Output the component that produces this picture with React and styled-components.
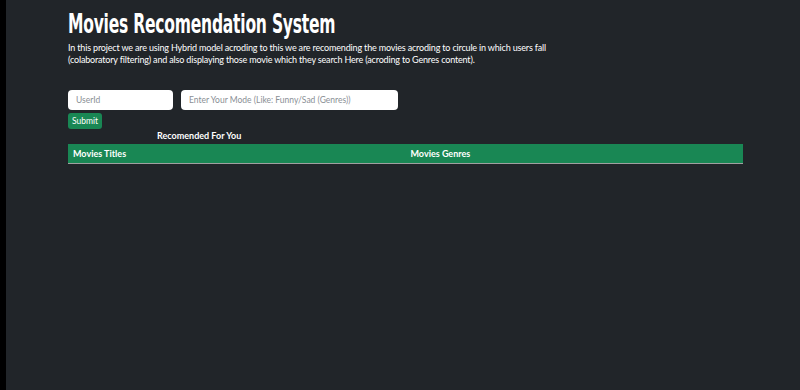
import React, { useState } from "react";
import styled, { createGlobalStyle } from "styled-components";

const GlobalStyle = createGlobalStyle`
  html, body {
    margin: 0;
    padding: 0;
    background: #212529;
  }
  body {
    font-family: Lato, "Open Sans", Arial, sans-serif;
    color: #ffffff;
  }
`;

const Page = styled.div`
  display: flex;
  min-height: 390px;
`;

const Strip = styled.div`
  width: 6px;
  background: #000000;
  flex-shrink: 0;
`;

const Main = styled.main`
  flex: 1;
  padding: 10px 0 0 62px;
`;

// heavy condensed headline (stand-in for Impact)
const Title = styled.h1`
  margin: 0;
  font-family: "DejaVu Sans", sans-serif;
  font-stretch: condensed;
  font-weight: 700;
  font-size: 27px;
  line-height: 28px;
  letter-spacing: -0.35px;
  transform: scaleX(0.64);
  transform-origin: left center;
  white-space: nowrap;
`;

const Intro = styled.p`
  margin: 4px 0 0;
  font-size: 9px;
  line-height: 12px;
  letter-spacing: -0.17px;
  white-space: nowrap;
`;

const Form = styled.form`
  margin-top: 24px;
  display: flex;
  flex-direction: column;
  align-items: flex-start;
  gap: 3px;
`;

const Inputs = styled.div`
  display: flex;
  gap: 8px;
`;

const Field = styled.input`
  box-sizing: border-box;
  width: ${(p) => p.$w}px;
  height: 20px;
  border: none;
  border-radius: 4px;
  padding: 0 8px;
  font-family: inherit;
  font-size: 8.5px;
  color: #212529;
  background: #ffffff;
  &::placeholder {
    color: #8a8f95;
  }
`;

const Submit = styled.button`
  box-sizing: border-box;
  height: 16px;
  padding: 0 4px;
  border: none;
  border-radius: 3px;
  background: #198754;
  color: #ffffff;
  font-family: inherit;
  font-size: 8.5px;
`;

const Heading = styled.div`
  margin: 1px 0 0 89px;
  font-size: 9px;
  font-weight: 700;
  line-height: 11px;
`;

const Table = styled.table`
  margin-top: 3px;
  width: 675px;
  border-collapse: collapse;
`;

const Th = styled.th`
  width: 50%;
  text-align: left;
  height: 19px;
  padding: 0 5px;
  background: #198754;
  font-size: 9px;
  font-weight: 700;
  border-bottom: 1.5px solid #a0a0a0;
`;

export default function App() {
  const [user, setUser] = useState("");
  const [mode, setMode] = useState("");

  return (
    <>
      <GlobalStyle />
      <Page>
        <Strip />
        <Main>
          <Title>Movies Recomendation System</Title>
          <Intro>
            In this project we are using Hybrid model acroding to this we are recomending the movies acroding to circule in which users fall
            <br />
            (colaboratory filtering) and also displaying those movie which they search Here (acroding to Genres content).
          </Intro>
          <Form onSubmit={(e) => e.preventDefault()}>
            <Inputs>
              <Field $w={105} placeholder="UserId" value={user} onChange={(e) => setUser(e.target.value)} />
              <Field $w={217} placeholder="Enter Your Mode (Like: Funny/Sad (Genres))" value={mode} onChange={(e) => setMode(e.target.value)} />
            </Inputs>
            <Submit type="submit">Submit</Submit>
          </Form>
          <Heading>Recomended For You</Heading>
          <Table>
            <thead>
              <tr>
                <Th>Movies Titles</Th>
                <Th>Movies Genres</Th>
              </tr>
            </thead>
          </Table>
        </Main>
      </Page>
    </>
  );
}
